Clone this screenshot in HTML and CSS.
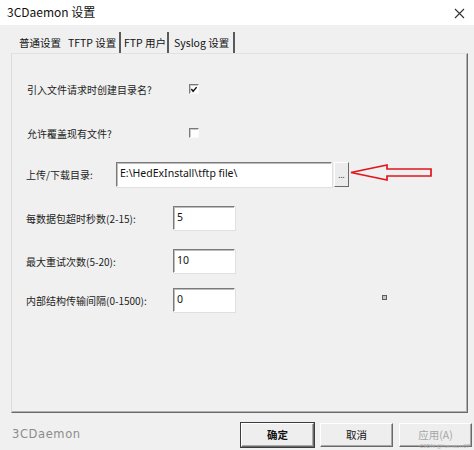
FILE: index.html
```html
<!DOCTYPE html>
<html lang="zh">
<head>
<meta charset="utf-8">
<title>3CDaemon 设置</title>
<link rel="stylesheet" href="styles.css">
</head>
<body>
<div class="window">
  <div class="titlebar">
    <span class="title">3CDaemon 设置</span>
    <svg class="close" width="11" height="11" viewBox="0 0 11 11"><path d="M1 1 L10 10 M10 1 L1 10" stroke="#333" stroke-width="1.1" fill="none"/></svg>
  </div>
  <div class="main">
    <div class="tabs">
      <div class="tab tab-1">普通设置</div>
      <div class="tab tab-2 sep">TFTP 设置</div>
      <div class="tab tab-3 sep">FTP 用户</div>
      <div class="tab tab-4 sep">Syslog 设置</div>
    </div>
    <div class="panel">
      <div class="row row-1">
        <span class="label lbl-check">引入文件请求时创建目录名?</span>
        <span class="checkbox"><svg width="9" height="9" viewBox="0 0 9 9"><path d="M1.5 4 L3.5 6.5 L7.5 1.8" stroke="#111" stroke-width="1.6" fill="none"/></svg></span>
      </div>
      <div class="row row-2">
        <span class="label lbl-check">允许覆盖现有文件?</span>
        <span class="checkbox"></span>
      </div>
      <div class="row row-3">
        <span class="label lbl-dir">上传/下载目录:</span>
        <span class="input input-dir">E:\HedExInstall\tftp file\</span>
        <span class="browse">...</span>
        <svg class="arrow" width="86" height="22" viewBox="0 0 86 22"><path d="M2 10.5 L38 3 L38 7 L82 7 L82 14 L38 14 L38 18 Z" fill="none" stroke="#e3141c" stroke-width="1.7" stroke-linejoin="miter"/></svg>
      </div>
      <div class="row row-4">
        <span class="label lbl-num">每数据包超时秒数(2-15):</span>
        <span class="input input-num">5</span>
      </div>
      <div class="row row-5">
        <span class="label lbl-num">最大重试次数(5-20):</span>
        <span class="input input-num">10</span>
      </div>
      <div class="row row-6">
        <span class="label lbl-num">内部结构传输间隔(0-1500):</span>
        <span class="input input-num">0</span>
        <span class="tiny-box"></span>
      </div>
    </div>
    <div class="footer">
      <span class="brand">3CDaemon</span>
      <div class="buttons">
        <span class="btn btn-default">确定</span>
        <span class="btn">取消</span>
        <span class="btn btn-disabled">应用(A)</span>
      </div>
      <span class="watermark">CSDN @hanson07</span>
    </div>
  </div>
</div>
</body>
</html>
```

FILE: styles.css
```css
* { box-sizing: border-box; }
html, body {
  margin: 0;
  padding: 0;
  background: #f0f0f0;
}
body {
  width: 474px;
  height: 450px;
  overflow: hidden;
  font-family: "Noto Sans CJK SC", "Noto Sans", sans-serif;
  color: #1e1e1e;
}
.window {
  width: 474px;
  height: 450px;
  position: relative;
}
.titlebar {
  height: 25px;
  background: #fff;
  display: flex;
  align-items: center;
  justify-content: space-between;
  padding: 0 9px 1px 7px;
}
.title {
  font-size: 12px;
  color: #111;
  line-height: 1;
}
.close { margin-top: 2px; }

.main {
  padding: 7px 6px 0 11px;
}

/* tabs */
.tabs {
  display: flex;
  height: 21px;
  align-items: stretch;
}
.tab {
  font-size: 10.5px;
  line-height: 21px;
  color: #111;
  white-space: nowrap;
}
.tab.sep { border-right: 2px solid #5a5a5a; }
.tab-1 { width: 54px; padding-left: 8px; }
.tab-2 { width: 56px; padding-left: 3px; }
.tab-3 { width: 48px; padding-left: 3px; }
.tab-4 { width: 66px; padding-left: 5px; }

/* panel */
.panel {
  height: 360px;
  border: 1px solid;
  border-color: #e2e2e2 #6a6a6a #6a6a6a #dcdcdc;
  box-shadow: inset -1px -1px 0 #b0b0b0;
  padding-left: 14px;
  display: flex;
  flex-direction: column;
}
.row {
  display: flex;
  align-items: center;
  height: 24px;
}
.row-1 { margin-top: 23px; }
.row-2 { margin-top: 20px; }
.row-3 { margin-top: 17px; height: 25px; }
.row-4 { margin-top: 19px; }
.row-5 { margin-top: 19px; }
.row-6 { margin-top: 15px; }

.label {
  font-size: 10px;
  color: #222;
  white-space: nowrap;
}
.lbl-check { width: 163px; padding-left: 1px; }
.lbl-dir { width: 90px; }
.lbl-num { width: 147px; }

.checkbox {
  width: 10px;
  height: 10px;
  background: #fff;
  border-top: 1px solid #7a7a7a;
  border-left: 1px solid #7a7a7a;
  border-right: 1px solid #fafafa;
  border-bottom: 1px solid #fafafa;
  box-shadow: inset 1px 1px 0 #c8c8c8;
  display: flex;
  align-items: center;
  justify-content: center;
}

.input {
  background: #fff;
  border-top: 1px solid #7a7a7a;
  border-left: 1px solid #7a7a7a;
  border-right: 1px solid #fff;
  border-bottom: 1px solid #fff;
  box-shadow: inset 1px 1px 0 #bdbdbd, 1px 1px 0 #e0e0e0;
  font-family: "Noto Sans", "Noto Sans CJK SC", sans-serif;
  font-size: 10.5px;
  color: #111;
  padding: 3px 0 0 3px;
  line-height: 14px;
  white-space: nowrap;
  align-self: stretch;
}
.input-dir { width: 216px; }
.input-num { width: 62px; }

.browse {
  width: 15px;
  align-self: stretch;
  margin-left: 2px;
  background: #ececec;
  border-top: 1px solid #fff;
  border-left: 1px solid #fff;
  border-right: 1px solid #6a6a6a;
  border-bottom: 1px solid #6a6a6a;
  font-size: 8px;
  line-height: 1;
  display: flex;
  align-items: flex-end;
  justify-content: center;
  padding-bottom: 7px;
  color: #222;
  font-family: "Noto Sans", sans-serif;
}
.arrow {
  margin-left: 0px;
  align-self: flex-start;
}

.tiny-box {
  width: 5px;
  height: 5px;
  margin-left: 147px;
  margin-bottom: 5px;
  border: 1px solid #5e5e5e;
  background: #c4c4c4;
}

/* footer */
.footer {
  height: 37px;
  display: flex;
  align-items: center;
  justify-content: space-between;
  padding: 0 0 0 1px;
  position: relative;
}
.brand {
  font-family: "DejaVu Sans", sans-serif;
  font-size: 11.5px;
  color: #8c8c8c;
  letter-spacing: 0.6px;
  margin-top: 5px;
}
.buttons {
  display: flex;
  gap: 6px;
  margin-top: 6px;
  margin-right: -4px;
}
.btn {
  width: 73px;
  height: 24px;
  background: #eeeeee;
  border-top: 1px solid #fff;
  border-left: 1px solid #fff;
  border-right: 1px solid #696969;
  border-bottom: 1px solid #696969;
  box-shadow: inset -1px -1px 0 #a8a8a8;
  font-size: 10.5px;
  color: #111;
  display: flex;
  align-items: center;
  justify-content: center;
}
.btn-default {
  outline: 1px solid #3c3c3c;
  font-weight: bold;
}
.btn-disabled {
  color: #a6a6a6;
}
.watermark {
  position: absolute;
  right: -2px;
  bottom: 1px;
  font-family: "Noto Sans", sans-serif;
  font-size: 6px;
  color: #b0b0b0;
  line-height: 1;
}
```
